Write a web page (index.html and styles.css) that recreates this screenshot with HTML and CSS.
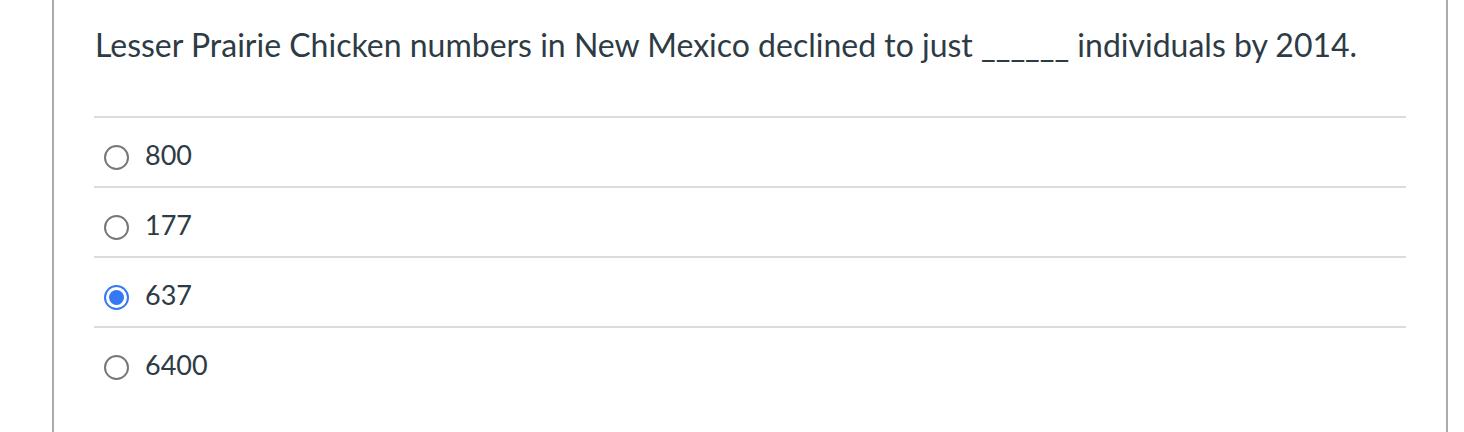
FILE: index.html
```html
<!DOCTYPE html>
<html>
<head>
<meta charset="utf-8">
<link rel="stylesheet" href="styles.css">
</head>
<body>
<div class="panel">
  <div class="question">Lesser Prairie Chicken numbers in New Mexico declined to just ______ individuals by 2014.</div>
  <div class="answers">
    <label class="answer"><span class="radio"></span><span class="label">800</span></label>
    <label class="answer"><span class="radio"></span><span class="label">177</span></label>
    <label class="answer"><span class="radio checked"></span><span class="label">637</span></label>
    <label class="answer"><span class="radio"></span><span class="label">6400</span></label>
  </div>
</div>
</body>
</html>
```
FILE: styles.css
```css
html, body {
  margin: 0;
  padding: 0;
  background: #fff;
}
body {
  font-family: Lato, "Liberation Sans", sans-serif;
  color: #2d3b45;
  height: 432px;
  overflow: hidden;
}
.panel {
  margin-left: 52px;
  height: 432px;
  border-left: 2px solid #ababab;
  border-right: 2px solid #ababab;
  padding: 0 40px;
  box-sizing: content-box;
  width: 1312px;
}
.question {
  font-size: 32px;
  line-height: 40px;
  padding-top: 25px;
  height: 116px;
  box-sizing: border-box;
  padding-left: 1px;
}
.answer {
  display: flex;
  align-items: flex-start;
  height: 70px;
  border-top: 2px solid #dcdcdc;
  box-sizing: border-box;
  padding-left: 10px;
  gap: 16px;
  font-size: 27px;
}
.radio {
  width: 25px;
  height: 25px;
  margin-top: 27px;
  border-radius: 50%;
  border: 2px solid #777;
  box-sizing: border-box;
  flex: none;
  position: relative;
}
.radio.checked {
  border-color: #3478f6;
  border-width: 2.5px;
}
.radio.checked::after {
  content: "";
  position: absolute;
  left: 2.5px;
  top: 2.5px;
  width: 15px;
  height: 15px;
  border-radius: 50%;
  background: #3478f6;
}
.label {
  line-height: 30px;
  margin-top: 22px;
}
```
